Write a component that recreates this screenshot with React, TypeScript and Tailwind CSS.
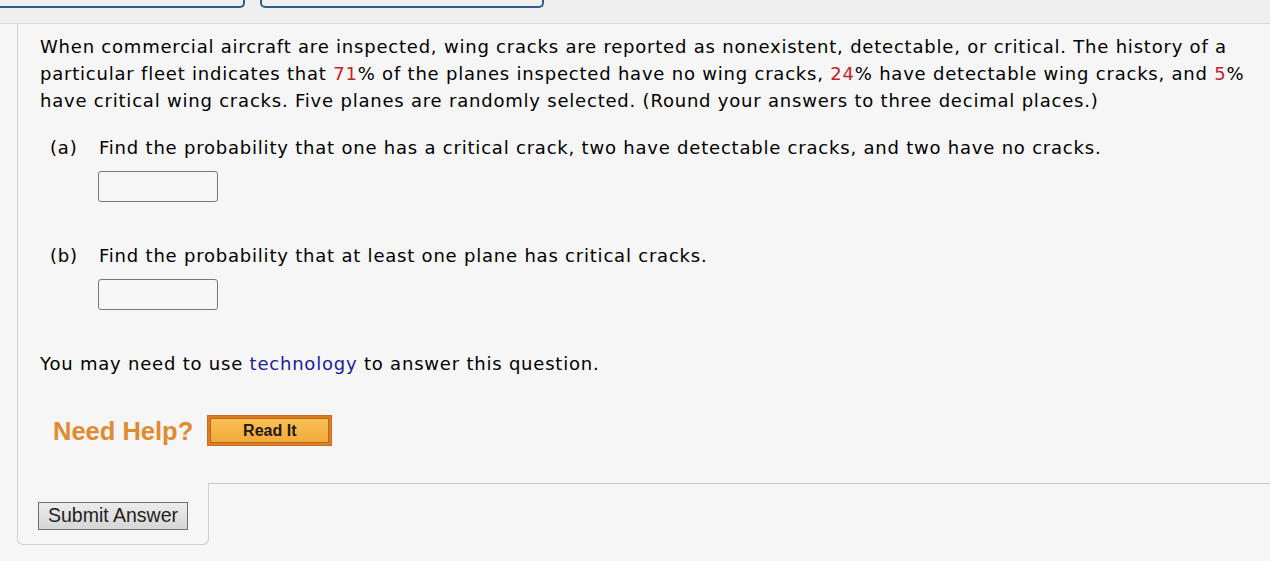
import React from "react";

const Red = ({ children }: { children: React.ReactNode }) => (
  <span className="text-[#c8202a]">{children}</span>
);

export default function App() {
  return (
    <div
      className="w-[1270px] h-[561px] bg-[#f6f6f6] overflow-hidden text-black"
      style={{ fontFamily: '"DejaVu Sans", Verdana, sans-serif' }}
    >
      {/* top strip with tabs */}
      <div className="h-[24px] bg-[#efefef] border-b border-[#d8d8d8] relative flex">
        <div className="ml-[-10px] w-[255px] h-[8px] border-2 border-t-0 border-[#2e5f8c] rounded-b-[5px]" />
        <div className="ml-[15px] w-[284px] h-[8px] border-2 border-t-0 border-[#2e5f8c] rounded-b-[5px]" />
      </div>

      <div className="ml-[17px] border-l border-[#cfcfcf] pt-[9px] pl-[22px] pr-[4px] text-[18px] leading-[27px] tracking-[0.79px] whitespace-nowrap">
        <p>
          When commercial aircraft are inspected, wing cracks are reported as nonexistent, detectable, or critical. The history of a
          <br />
          particular fleet indicates that <Red>71</Red>% of the planes inspected have no wing cracks, <Red>24</Red>% have detectable wing cracks, and <Red>5</Red>%
          <br />
          have critical wing cracks. Five planes are randomly selected. (Round your answers to three decimal places.)
        </p>

        <div className="mt-[20px] flex">
          <span className="w-[59px] pl-[10px] shrink-0">(a)</span>
          <div>
            <div>Find the probability that one has a critical crack, two have detectable cracks, and two have no cracks.</div>
            <div className="mt-[10px] ml-[-1px] w-[120px] h-[31px] border border-[#777] rounded-[3px] bg-[#f6f6f6]" />
          </div>
        </div>

        <div className="mt-[40px] flex">
          <span className="w-[59px] pl-[10px] shrink-0">(b)</span>
          <div>
            <div>Find the probability that at least one plane has critical cracks.</div>
            <div className="mt-[10px] ml-[-1px] w-[120px] h-[31px] border border-[#777] rounded-[3px] bg-[#f6f6f6]" />
          </div>
        </div>

        <p className="mt-[40px]">
          You may need to use <span className="text-[#1a1a9c]">technology</span> to answer this question.
        </p>

        <div className="mt-[38px] flex items-center pl-[13px] pb-[37px] tracking-normal">
          <span
            className="text-[25.5px] leading-[30px] font-bold text-[#e28a2f]"
            style={{ fontFamily: '"Liberation Sans", Arial, sans-serif' }}
          >
            Need Help?
          </span>
          <div className="ml-[14px] w-[125px] h-[31px] bg-[#e07d23] p-[2px] border border-[#c66f1f]">
            <div
              className="w-full h-full bg-gradient-to-b from-[#f7c055] to-[#f1aa3a] border border-[#b5691e] flex items-center justify-center text-[16px] font-bold text-[#1f1a10]"
              style={{ fontFamily: '"Liberation Sans", Arial, sans-serif' }}
            >
              Read It
            </div>
          </div>
        </div>
      </div>

      <div className="flex">
        <div className="ml-[17px] w-[192px] h-[62px] border-l border-r border-b border-[#cfcfcf] rounded-b-[6px] pl-[20px] pt-[19px]">
          <div
            className="w-[150px] h-[28px] border border-[#6e6e6e] bg-gradient-to-b from-[#ececec] to-[#d6d6d6] flex items-center justify-center text-[19.5px] text-[#222] whitespace-nowrap"
            style={{ fontFamily: '"Liberation Sans", Arial, sans-serif' }}
          >
            Submit Answer
          </div>
        </div>
        <div className="flex-1 border-t border-[#c8c8c8] ml-[-1px]" />
      </div>
    </div>
  );
}
